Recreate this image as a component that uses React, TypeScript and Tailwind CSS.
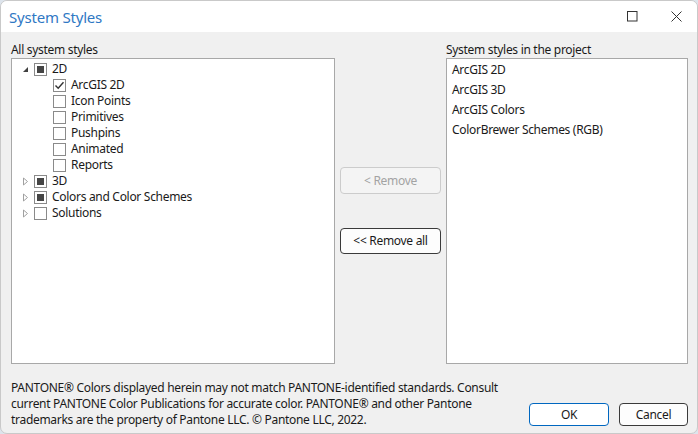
import React from "react";

const font = { fontFamily: '"Segoe UI", "Noto Sans", "Liberation Sans", sans-serif' };

function Check({ state }: { state: "none" | "checked" | "partial" }) {
  return (
    <div className="w-[13px] h-[13px] border border-[#8a8a8a] bg-white flex items-center justify-center shrink-0">
      {state === "partial" && <div className="w-[7px] h-[7px] bg-[#454545]" />}
      {state === "checked" && (
        <svg width="11" height="11" viewBox="0 0 11 11">
          <path d="M1.5 5.5 L4.2 8.3 L9.5 2.2" fill="none" stroke="#333" strokeWidth="1.4" />
        </svg>
      )}
    </div>
  );
}

function Expander({ open }: { open: boolean }) {
  return (
    <div className="w-[13px] h-[16px] flex items-center justify-center shrink-0">
      {open ? (
        <svg width="7" height="7" viewBox="0 0 7 7">
          <path d="M6 1 L6 6 L1 6 Z" fill="#404040" />
        </svg>
      ) : (
        <svg width="7" height="9" viewBox="0 0 7 9">
          <path d="M1.5 1 L5.5 4.5 L1.5 8 Z" fill="none" stroke="#a0a0a0" strokeWidth="1" />
        </svg>
      )}
    </div>
  );
}

function TopRow({ open, state, label }: { open: boolean; state: "none" | "checked" | "partial"; label: string }) {
  return (
    <div className="h-[16px] flex items-center pl-[7px]">
      <Expander open={open} />
      <div className="ml-[2px]"><Check state={state} /></div>
      <span className="ml-[5px] leading-[16px]">{label}</span>
    </div>
  );
}

function ChildRow({ state, label }: { state: "none" | "checked" | "partial"; label: string }) {
  return (
    <div className="h-[16px] flex items-center pl-[41px]">
      <Check state={state} />
      <span className="ml-[5px] leading-[16px]">{label}</span>
    </div>
  );
}

export default function App() {
  return (
    <div className="w-[698px] h-[434px] bg-[#dde4ec]" style={font}>
      <div className="w-[698px] h-[434px] rounded-[7px] overflow-hidden border border-[#c9c9c9] flex flex-col bg-[#f0f0f0] text-[12px] tracking-[-0.3px] text-[#1a1a1a]">
        <div className="h-[31px] bg-white flex items-center shrink-0 relative">
          <span className="pl-[8px] text-[15px] tracking-[-0.2px] text-[#2f78c4] leading-[20px]">System Styles</span>
          <div className="ml-auto flex items-center">
            <svg width="11" height="11" viewBox="0 0 11 11" className="mr-[33px]">
              <rect x="0.5" y="0.5" width="9.5" height="9.5" fill="none" stroke="#333" strokeWidth="1" />
            </svg>
            <svg width="11" height="11" viewBox="0 0 11 11" className="mr-[15px]">
              <path d="M0.5 0.5 L10.5 10.5 M10.5 0.5 L0.5 10.5" stroke="#333" strokeWidth="1" />
            </svg>
          </div>
        </div>
        <div className="flex-1 flex flex-col pl-[10px] pr-[9px] pt-[10px]">
          <div className="flex gap-[5px]">
            <div className="w-[324px] flex flex-col">
              <div className="h-[16px] leading-[16px]">All system styles</div>
              <div className="h-[306px] bg-white border border-[#a8a8a8] pt-[2px]">
                <TopRow open={true} state="partial" label="2D" />
                <ChildRow state="checked" label="ArcGIS 2D" />
                <ChildRow state="none" label="Icon Points" />
                <ChildRow state="none" label="Primitives" />
                <ChildRow state="none" label="Pushpins" />
                <ChildRow state="none" label="Animated" />
                <ChildRow state="none" label="Reports" />
                <TopRow open={false} state="partial" label="3D" />
                <TopRow open={false} state="partial" label="Colors and Color Schemes" />
                <TopRow open={false} state="none" label="Solutions" />
              </div>
            </div>
            <div className="w-[101px] flex flex-col pt-[125px]">
              <div className="h-[27px] rounded-[4px] border border-[#cccccc] bg-[#f4f4f4] text-[#a3a3a3] flex items-center justify-center">
                &lt; Remove
              </div>
              <div className="h-[26px] mt-[34px] rounded-[4px] border border-[#3a3a3a] bg-[#fdfdfd] flex items-center justify-center">
                &lt;&lt; Remove all
              </div>
            </div>
            <div className="w-[242px] flex flex-col">
              <div className="h-[16px] leading-[16px]">System styles in the project</div>
              <div className="h-[306px] bg-white border border-[#a8a8a8] pl-[5px] pt-[1px]">
                <div className="h-[20px] leading-[20px]">ArcGIS 2D</div>
                <div className="h-[20px] leading-[20px]">ArcGIS 3D</div>
                <div className="h-[20px] leading-[20px]">ArcGIS Colors</div>
                <div className="h-[20px] leading-[20px]">ColorBrewer Schemes (RGB)</div>
              </div>
            </div>
          </div>
          <div className="flex mt-[16px]">
            <div className="leading-[16px] whitespace-nowrap">
              <div>PANTONE® Colors displayed herein may not match PANTONE-identified standards. Consult</div>
              <div>current PANTONE Color Publications for accurate color. PANTONE® and other Pantone</div>
              <div>trademarks are the property of Pantone LLC. © Pantone LLC, 2022.</div>
            </div>
            <div className="ml-auto flex items-end gap-[10px] pb-[2px]">
              <div className="w-[80px] h-[23px] rounded-[4px] border border-[#0067c0] bg-white flex items-center justify-center">OK</div>
              <div className="w-[69px] h-[23px] rounded-[4px] border border-[#3a3a3a] bg-[#fdfdfd] flex items-center justify-center">Cancel</div>
            </div>
          </div>
        </div>
      </div>
    </div>
  );
}
